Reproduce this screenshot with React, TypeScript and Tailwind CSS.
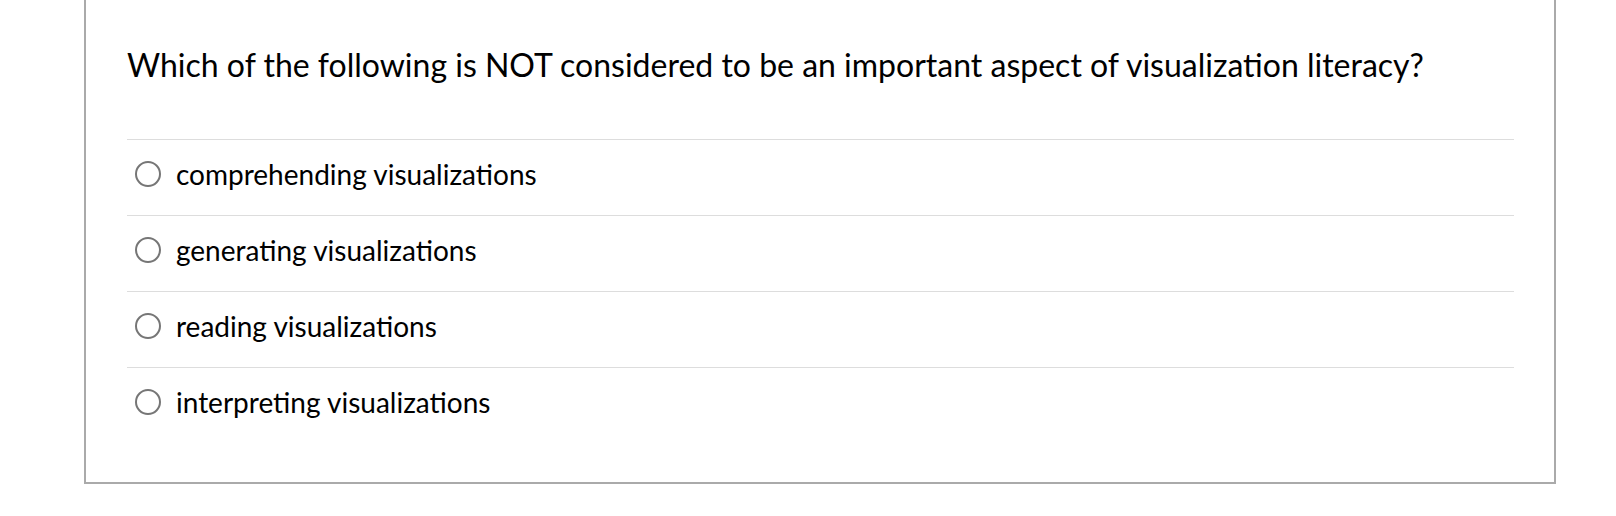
const options = [
  'comprehending visualizations',
  'generating visualizations',
  'reading visualizations',
  'interpreting visualizations',
];

export default function App() {
  return (
    <div className="w-[1616px] h-[516px] bg-white" style={{ fontFamily: 'Lato, "Noto Sans", sans-serif' }}>
      <div className="ml-[84px] w-[1472px] h-[484px] border-2 border-t-0 border-[#aaaaaa] pl-[41px] pr-[40px] pt-[41px]">
        <p className="text-[32px] leading-[48px] text-black">
          Which of the following is NOT considered to be an important aspect of visualization literacy?
        </p>

        <div className="mt-[50px] flex flex-col">
          {options.map((opt) => (
            <label
              key={opt}
              className="flex items-center gap-[15px] border-t border-[#dddddd] pt-[14px] pb-[21px] pl-[8px]"
            >
              <span className="w-[26px] h-[26px] rounded-full border-2 border-[#767676] bg-white shrink-0" />
              <span className="text-[28px] leading-[40px] text-black">{opt}</span>
            </label>
          ))}
        </div>
      </div>
    </div>
  );
}
